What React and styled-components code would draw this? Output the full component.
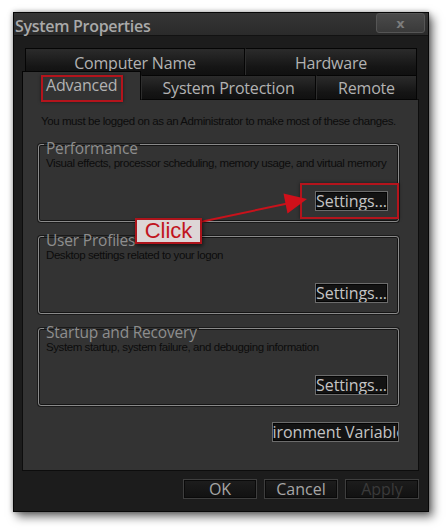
import styled, { createGlobalStyle } from "styled-components";

const GlobalStyle = createGlobalStyle`
  body {
    margin: 0;
    background: #ffffff;
  }
`;

const Page = styled.div`
  position: relative;
  width: 447px;
  height: 531px;
  padding: 12px 0 0 13px;
  box-sizing: border-box;
  font-family: "Open Sans", "DejaVu Sans", sans-serif;
`;

const Window = styled.div`
  width: 416px;
  height: 500px;
  box-sizing: border-box;
  background: #1c1c1c;
  border: 1px solid #070707;
  box-shadow: 4px 5px 9px rgba(0, 0, 0, 0.55), 0 0 5px rgba(0, 0, 0, 0.35);
  display: flex;
  flex-direction: column;
`;

const TitleBar = styled.div`
  height: 22px;
  display: flex;
  justify-content: space-between;
  align-items: flex-start;
  background: linear-gradient(#353535, #2a2a2a);
  border-bottom: 1px solid #121212;
  padding: 0 3px 0 1px;
`;

const Title = styled.span`
  font-size: 16px;
  font-weight: 600;
  color: #a9a9a9;
  line-height: 16px;
  padding-top: 5px;
  letter-spacing: -0.3px;
`;

const CloseButton = styled.div`
  width: 49px;
  height: 20px;
  box-sizing: border-box;
  border: 1px solid #555;
  border-radius: 3px;
  background: linear-gradient(#4a4a4a, #3a3a3a);
  color: #7c7c7c;
  font-family: "DejaVu Sans", sans-serif;
  font-size: 13px;
  font-weight: bold;
  display: flex;
  align-items: center;
  justify-content: center;
`;

const Body = styled.div`
  padding: 12px 9px 0 8px;
  display: flex;
  flex-direction: column;
`;

const TabRowTop = styled.div`
  margin-left: 3px;
  width: 392px;
  height: 27px;
  display: grid;
  grid-template-columns: 220px 172px;
`;

const TabRowBottom = styled.div`
  height: 25px;
  display: flex;
  align-items: flex-end;
  margin-bottom: -1px;
  position: relative;
  z-index: 1;
`;

const Tab = styled.div`
  box-sizing: border-box;
  width: ${(p) => p.$w}px;
  height: ${(p) => (p.$active ? 29 : 25)}px;
  border: 1px solid #050505;
  border-left-color: ${(p) => (p.$first ? "#050505" : "#2d2d2d")};
  border-bottom: ${(p) => (p.$active ? "none" : "1px solid #050505")};
  background: ${(p) =>
    p.$active ? "#333333" : "linear-gradient(#2b2b2b, #151515 70%, #101010)"};
  color: #b2b2b2;
  font-size: 16px;
  line-height: 16px;
  letter-spacing: -0.2px;
  display: flex;
  align-items: flex-start;
  justify-content: ${(p) => (p.$active ? "flex-start" : "center")};
  padding-left: ${(p) => (p.$active ? 23 : 0)}px;
  padding-top: ${(p) => (p.$active ? 5 : 4)}px;
`;

const TopTab = styled(Tab)`
  height: 27px;
  border-bottom: none;
  padding-top: 6px;
`;

const Panel = styled.div`
  width: 397px;
  height: 372px;
  box-sizing: border-box;
  background: #333333;
  border: 1px solid #0d0d0d;
  padding: 14px 0 0 15px;
  display: flex;
  flex-direction: column;
`;

const SmallText = styled.div`
  font-family: "Liberation Sans", Arial, sans-serif;
  font-size: 11.5px;
  letter-spacing: -0.42px;
  color: #0c0c0c;
  white-space: nowrap;
`;

const Note = styled(SmallText)`
  padding-left: 3px;
  height: 14px;
  line-height: 14px;
  margin-bottom: 4px;
`;

const Group = styled.fieldset`
  width: 361px;
  box-sizing: border-box;
  margin: 0 0 2px 0;
  padding: 0 10px 10px 5px;
  border: 1px solid #8a8a8a;
  border-radius: 3px;
  box-shadow: inset 0 0 0 1px #141414, 0 0 0 1px #1a1a1a;
  min-width: 0;
`;

const Legend = styled.legend`
  font-size: 15.5px;
  color: #8e8e8e;
  padding: 8px 2px 0;
  line-height: 16px;
  letter-spacing: -0.2px;
`;

const Desc = styled(SmallText)`
  margin-top: 1px;
  padding-left: 2px;
  height: 12px;
  line-height: 12px;
`;

const ButtonRow = styled.div`
  margin-top: 22px;
  display: flex;
  justify-content: flex-end;
`;

const DarkButton = styled.div`
  width: ${(p) => p.$w}px;
  height: 20px;
  box-sizing: border-box;
  background: #131313;
  border: 1px solid #6c6c6c;
  box-shadow: inset 0 0 0 1px #050505;
  color: #c4c4c4;
  font-size: 16px;
  letter-spacing: -0.1px;
  display: flex;
  align-items: center;
  justify-content: center;
  overflow: hidden;
  white-space: nowrap;
`;

const EnvRow = styled.div`
  width: 361px;
  display: flex;
  justify-content: flex-end;
  margin-top: 14px;
`;

const Footer = styled.div`
  display: flex;
  justify-content: flex-end;
  gap: 7px;
  padding: 8px 9px 0 0;
`;

const FooterButton = styled.div`
  width: 74px;
  height: 20px;
  box-sizing: border-box;
  background: linear-gradient(#1d1d1d, #111111);
  border: 1px solid #3e3e3e;
  box-shadow: inset 0 0 0 1px #0a0a0a;
  color: ${(p) => (p.$disabled ? "#3a3a3a" : "#a6a6a6")};
  font-size: 16px;
  display: flex;
  align-items: center;
  justify-content: center;
`;

const RedBox = styled.div`
  position: absolute;
  z-index: 2;
  left: ${(p) => p.$x}px;
  top: ${(p) => p.$y}px;
  width: ${(p) => p.$w}px;
  height: ${(p) => p.$h}px;
  box-sizing: border-box;
  border: 2px solid #b4141c;
  box-shadow: 0 0 3px rgba(0, 0, 0, 0.5);
`;

const ClickLabel = styled.div`
  position: absolute;
  left: 135px;
  top: 218px;
  width: 67px;
  height: 26px;
  box-sizing: border-box;
  background: #ddd6d6;
  border: 2px solid #ad141b;
  box-shadow: 1px 2px 4px rgba(0, 0, 0, 0.6);
  color: #c1141d;
  font-family: "Liberation Sans", Arial, sans-serif;
  font-size: 22px;
  line-height: 22px;
  display: flex;
  align-items: center;
  justify-content: center;
  z-index: 4;
`;

const ArrowLayer = styled.svg`
  position: absolute;
  left: 0;
  top: 0;
  z-index: 3;
  pointer-events: none;
`;

const groups = [
  {
    title: "Performance",
    desc: "Visual effects, processor scheduling, memory usage, and virtual memory",
  },
  { title: "User Profiles", desc: "Desktop settings related to your logon" },
  {
    title: "Startup and Recovery",
    desc: "System startup, system failure, and debugging information",
  },
];

export default function App() {
  return (
    <Page>
      <GlobalStyle />
      <Window>
        <TitleBar>
          <Title>System Properties</Title>
          <CloseButton>x</CloseButton>
        </TitleBar>
        <Body>
          <TabRowTop>
            <TopTab $w={220} $first>
              Computer Name
            </TopTab>
            <TopTab $w={172}>Hardware</TopTab>
          </TabRowTop>
          <TabRowBottom>
            <Tab $w={119} $active $first>
              Advanced
            </Tab>
            <Tab $w={175}>System Protection</Tab>
            <Tab $w={101}>Remote</Tab>
          </TabRowBottom>
          <Panel>
            <Note>You must be logged on as an Administrator to make most of these changes.</Note>
            {groups.map((g) => (
              <Group key={g.title}>
                <Legend>{g.title}</Legend>
                <Desc>{g.desc}</Desc>
                <ButtonRow>
                  <DarkButton $w={73}>Settings...</DarkButton>
                </ButtonRow>
              </Group>
            ))}
            <EnvRow>
              <DarkButton $w={127}>Environment Variables...</DarkButton>
            </EnvRow>
          </Panel>
        </Body>
        <Footer>
          <FooterButton>OK</FooterButton>
          <FooterButton>Cancel</FooterButton>
          <FooterButton $disabled>Apply</FooterButton>
        </Footer>
      </Window>

      <RedBox $x={41} $y={75} $w={82} $h={27} />
      <RedBox $x={300} $y={183} $w={99} $h={36} />
      <ArrowLayer width="447" height="531">
        <line x1="200" y1="222" x2="290" y2="203" stroke="#c8121b" strokeWidth="2" />
        <polygon points="307,199 287.5,213.5 283.5,193.5" fill="#d0101a" />
      </ArrowLayer>
      <ClickLabel>Click</ClickLabel>
    </Page>
  );
}
